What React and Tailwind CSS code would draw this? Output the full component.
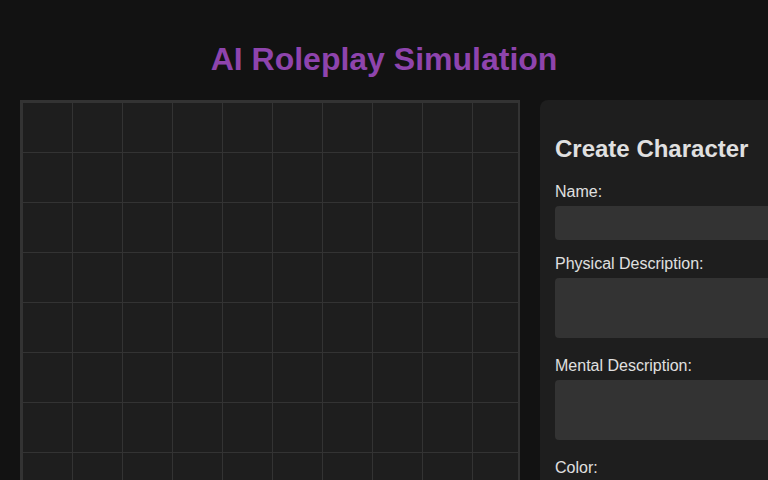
const cells = Array.from({ length: 100 });

function Field({ label, children, className }) {
  return (
    <div className={className}>
      <label className="block mb-[5px] text-[16px] leading-[18px] text-[#e0e0e0]">{label}</label>
      {children}
    </div>
  );
}

export default function App() {
  return (
    <div className="min-h-[480px] h-[480px] overflow-hidden bg-[#121212] p-5 font-['Liberation_Sans',Arial,sans-serif] text-[#e0e0e0]">
      <h1 className="text-center text-[32px] leading-[37px] font-bold text-[#8e44ad] mt-[21px] mb-[22px]">
        AI Roleplay Simulation
      </h1>

      <div className="flex gap-5 items-start">
        <div className="w-[500px] h-[500px] shrink-0 border-2 border-[#333] bg-[#1e1e1e] overflow-hidden">
          <div className="grid grid-cols-[repeat(10,50px)] auto-rows-[50px]">
            {cells.map((_, i) => (
              <div key={i} className="border-l border-t border-[#333]" />
            ))}
          </div>
        </div>

        <div className="w-[300px] shrink-0 bg-[#1e1e1e] rounded-lg p-[15px] pb-6">
          <h2 className="text-[24px] leading-[28px] font-bold text-[#e0e0e0] mt-5 mb-5">Create Character</h2>

          <Field label="Name:" className="mb-[15px]">
            <input type="text" className="block w-full h-[34px] bg-[#333] rounded px-2 text-[#e0e0e0] outline-none" />
          </Field>

          <Field label="Physical Description:" className="mb-[19px]">
            <textarea className="block w-full h-[60px] bg-[#333] rounded px-2 py-1 text-[#e0e0e0] outline-none resize-none" />
          </Field>

          <Field label="Mental Description:" className="mb-[19px]">
            <textarea className="block w-full h-[60px] bg-[#333] rounded px-2 py-1 text-[#e0e0e0] outline-none resize-none" />
          </Field>

          <Field label="Color:">
            <input type="color" defaultValue="#8e44ad" className="block w-[60px] h-[34px] bg-[#333] rounded" />
          </Field>
        </div>
      </div>
    </div>
  );
}
